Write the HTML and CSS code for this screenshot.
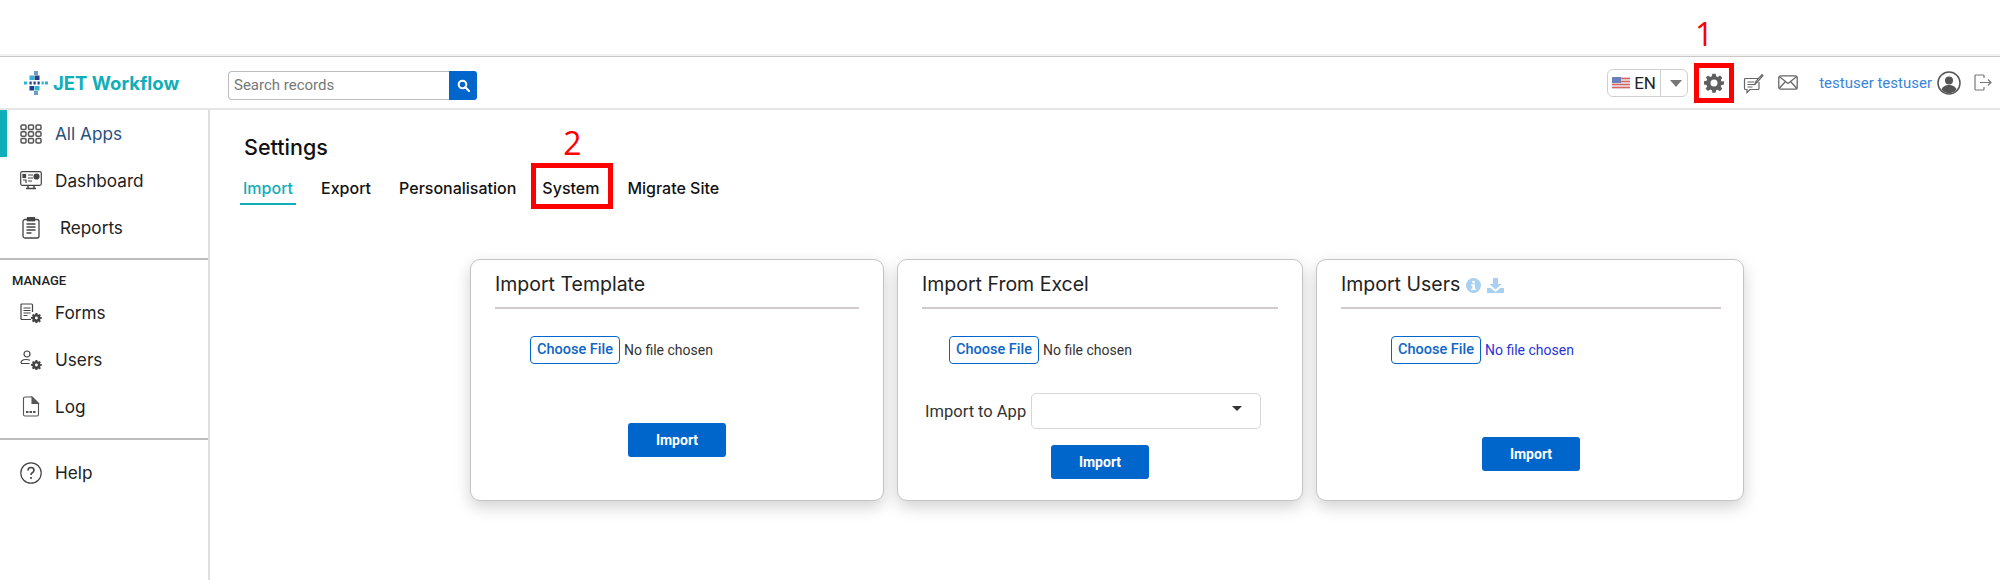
FILE: index.html
```html
<!DOCTYPE html>
<html lang="en">
<head>
<meta charset="utf-8">
<title>JET Workflow Settings</title>
<link rel="stylesheet" href="styles.css">
</head>
<body>
<div class="topgap"></div>
<header class="header">
  <div class="logo">
    <svg class="logo-mark" width="24" height="24" viewBox="0 0 24 24">
      <rect x="10" y="0" width="4" height="4" fill="#6f9cc4"/>
      <rect x="5.500" y="4.500" width="4.500" height="4.500" fill="#2bb5cf"/><rect x="10.500" y="4.500" width="5" height="4.500" fill="#1e3f8f"/>
      <rect x="0" y="10.500" width="3" height="3" fill="#2bb5cf"/><rect x="5.500" y="10.500" width="2.200" height="3" fill="#1e3f8f"/><rect x="9.500" y="10.500" width="2.200" height="3" fill="#1e3f8f"/><rect x="13.500" y="10.500" width="2.200" height="3" fill="#1e3f8f"/><rect x="17.500" y="10.500" width="2.200" height="3" fill="#2bb5cf"/><rect x="21" y="10.500" width="3" height="3" fill="#2bb5cf"/>
      <rect x="5.500" y="15" width="4.500" height="4.500" fill="#1e3f8f"/><rect x="10.500" y="15" width="5" height="4.500" fill="#2bb5cf"/>
      <rect x="10" y="20" width="4" height="4" fill="#6f9cc4"/>
    </svg>
    <span class="logo-text">JET Workflow</span>
  </div>
  <div class="search">
    <span class="search-input">Search records</span>
    <span class="search-btn">
      <svg width="13" height="13" viewBox="0 0 13 13" fill="none" stroke="#fff" stroke-width="2"><circle cx="5.500" cy="5.500" r="3.800"/><path d="M8.300 8.300 12 12" stroke-linecap="round"/></svg>
    </span>
  </div>
  <div class="header-right">
    <div class="lang">
      <span class="lang-main">
        <svg width="18" height="12" viewBox="0 0 18 12"><rect width="18" height="12" fill="#e8e8f0"/><path d="M0 1.500h18M0 4.500h18M0 7.500h18M0 10.500h18" stroke="#d9645f" stroke-width="1.400"/><rect width="9" height="6" fill="#6d7fb8"/></svg>
        <span class="lang-code">EN</span>
      </span>
      <span class="lang-caret"></span>
    </div>
    <div class="gear-box">
      <svg width="20" height="20" viewBox="0 0 24 24"><path fill="#5f5f5f" fill-rule="evenodd" d="M10 1h4l.6 3.100 1.900.8 2.700-1.800 2.800 2.800-1.800 2.700.8 1.900L24 10v4l-3.100.6-.8 1.900 1.800 2.700-2.800 2.800-2.700-1.800-1.900.8L14 24h-4l-.6-3.100-1.900-.8-2.700 1.800L2 19.100l1.800-2.700-.8-1.900L0 14v-4l3.100-.6.8-1.900L2 5.900l2.800-2.800 2.700 1.800 1.900-.8zM12 8a4.200 4.200 0 1 0 0 8.400A4.200 4.200 0 0 0 12 8z" transform="translate(0 -.2)"/></svg>
    </div>
    <svg class="icon-chat" width="21" height="22" viewBox="0 0 21 22" fill="none" stroke="#666" stroke-width="1.200"><path d="M15.500 6.500H2.500q-1 0-1 1v9q0 1 1 1H4v3l3-3h8q1 0 1-1V10"/><path d="M4.500 10h7M4.500 12.500h8M4.500 15h5"/><path d="M12 12l1.200-3L19 2.500l1 1-5.800 6.800z" fill="#fff"/></svg>
    <svg class="icon-mail" width="20" height="15" viewBox="0 0 20 15" fill="none" stroke="#666" stroke-width="1.300"><rect x=".8" y=".8" width="18.400" height="13.400" rx="2"/><path d="M1.200 1.500 10 8.500l8.800-7M1.200 13.500 7.500 6.500M18.800 13.500 12.500 6.500"/></svg>
    <span class="username">testuser testuser</span>
    <svg class="icon-avatar" width="24" height="24" viewBox="0 0 24 24"><circle cx="12" cy="12" r="11" fill="#fff" stroke="#555" stroke-width="1.500"/><circle cx="12" cy="9.500" r="4" fill="#555"/><path d="M4.500 18.500c1.500-3.500 4.500-4.500 7.500-4.500s6 1 7.500 4.500A10.500 10.500 0 0 1 12 22.500a10.500 10.500 0 0 1-7.500-4z" fill="#555"/></svg>
    <svg class="icon-logout" width="18" height="17" viewBox="0 0 18 17" fill="none" stroke="#777" stroke-width="1.200"><path d="M10 4V2q0-1-1-1H2Q1 1 1 2v13q0 1 1 1h7q1 0 1-1v-2"/><path d="M6 8.500h11M14 5.500l3 3-3 3"/></svg>
  </div>
</header>
<div class="body-row">
  <aside class="sidebar">
    <nav class="nav-group">
      <a class="nav-item active">
        <svg class="nav-icon" width="22" height="20" viewBox="0 0 22 20" fill="none" stroke="#555" stroke-width="1.500"><rect x="1" y="1" width="5" height="4.500" rx="1.200"/><rect x="8.500" y="1" width="5" height="4.500" rx="1.200"/><rect x="16" y="1" width="5" height="4.500" rx="1.200"/><rect x="1" y="7.700" width="5" height="4.500" rx="1.200"/><rect x="8.500" y="7.700" width="5" height="4.500" rx="1.200"/><rect x="16" y="7.700" width="5" height="4.500" rx="1.200"/><rect x="1" y="14.400" width="5" height="4.500" rx="1.200"/><rect x="8.500" y="14.400" width="5" height="4.500" rx="1.200"/><rect x="16" y="14.400" width="5" height="4.500" rx="1.200"/></svg>
        <span>All Apps</span>
      </a>
      <a class="nav-item">
        <svg class="nav-icon" width="22" height="19" viewBox="0 0 22 19" fill="none" stroke="#444" stroke-width="1.200"><rect x=".7" y=".7" width="20.600" height="13.600" rx="1.500"/><path d="M8 14.500v2.500M14 14.500v2.500M6 17.500h10" stroke-width="1.500"/><path d="M3 9h3v3M8 4h5M8 7h5M8 10h4"/><circle cx="16.500" cy="5.500" r="2.500" fill="#444"/><rect x="3" y="3.500" width="2.500" height="3" fill="#444"/></svg>
        <span>Dashboard</span>
      </a>
      <a class="nav-item reports">
        <svg class="nav-icon" width="18" height="22" viewBox="0 0 18 22" fill="none" stroke="#444" stroke-width="1.300"><rect x="1" y="2.500" width="16" height="18.500" rx="2"/><rect x="5.500" y=".7" width="7" height="3" fill="#444"/><path d="M4.500 7h9M4.500 10h9M4.500 13h9M4.500 16h5"/></svg>
        <span>Reports</span>
      </a>
    </nav>
    <div class="section">
      <div class="section-title">MANAGE</div>
      <a class="nav-item">
        <svg class="nav-icon" width="22" height="20" viewBox="0 0 22 20" fill="none" stroke="#444" stroke-width="1.200"><path d="M11 16.500H2q-1 0-1-1V2q0-1 1-1h9.500q1 0 1 1v7"/><path d="M3.500 5h7M3.500 7.500h7M3.500 10h7M3.500 12.500h4"/><path transform="translate(11 9.500) scale(.45)" fill="#444" stroke="none" fill-rule="evenodd" d="M10 1h4l.6 3.100 1.900.8 2.700-1.800 2.800 2.800-1.800 2.700.8 1.900L24 10v4l-3.100.6-.8 1.900 1.800 2.700-2.800 2.800-2.700-1.800-1.900.8L14 24h-4l-.6-3.100-1.900-.8-2.700 1.800L2 19.100l1.800-2.700-.8-1.900L0 14v-4l3.100-.6.8-1.900L2 5.900l2.800-2.800 2.700 1.800 1.900-.8zM12 9a3.300 3.300 0 1 0 0 6.600A3.300 3.300 0 0 0 12 9z"/></svg>
        <span>Forms</span>
      </a>
      <a class="nav-item">
        <svg class="nav-icon" width="22" height="20" viewBox="0 0 22 20" fill="none" stroke="#444" stroke-width="1.200"><circle cx="7" cy="4" r="3"/><path d="M1 13q0-3.500 5-3.500 2.500 0 4 .8M1 13.500h8.500"/><path transform="translate(11 9.500) scale(.45)" fill="#444" stroke="none" fill-rule="evenodd" d="M10 1h4l.6 3.100 1.900.8 2.700-1.800 2.800 2.800-1.800 2.700.8 1.900L24 10v4l-3.100.6-.8 1.900 1.800 2.700-2.800 2.800-2.700-1.800-1.900.8L14 24h-4l-.6-3.100-1.900-.8-2.700 1.800L2 19.100l1.800-2.700-.8-1.900L0 14v-4l3.100-.6.8-1.900L2 5.900l2.800-2.800 2.700 1.800 1.900-.8zM12 9a3.300 3.300 0 1 0 0 6.600A3.300 3.300 0 0 0 12 9z"/></svg>
        <span>Users</span>
      </a>
      <a class="nav-item">
        <svg class="nav-icon" width="22" height="21" viewBox="0 0 22 21" fill="none" stroke="#555" stroke-width="1.100"><path d="M12 1H5Q3.500 1 3.500 2.500v16q0 1.500 1.500 1.500h12q1.500 0 1.500-1.500V7.500z"/><path d="M12 1v6.500h6.500z" fill="#555"/><path d="M6 16h10" stroke-width="2" stroke-dasharray="2.500 1"/></svg>
        <span>Log</span>
      </a>
    </div>
    <div class="help">
      <a class="nav-item">
        <svg class="nav-icon" width="22" height="22" viewBox="0 0 22 22" fill="none" stroke="#444" stroke-width="1.200"><circle cx="11" cy="11" r="10.200"/><path d="M8 8.500q0-3 3-3t3 2.800q0 1.500-1.700 2.500-1.300.8-1.300 2.200" stroke-width="1.600"/><circle cx="11" cy="16" r="1.100" fill="#444" stroke="none"/></svg>
        <span>Help</span>
      </a>
    </div>
  </aside>
  <main class="main">
    <h1 class="page-title">Settings</h1>
    <div class="tabs">
      <a class="tab current">Import</a>
      <a class="tab">Export</a>
      <a class="tab">Personalisation</a>
      <a class="tab boxed">System<span class="mark mark-two">2</span></a>
      <a class="tab">Migrate Site</a>
    </div>
    <section class="cards">
      <article class="card card-template">
        <h2 class="card-title">Import Template</h2>
        <div class="file-row">
          <span class="file-btn">Choose File</span><span class="file-name">No file chosen</span>
        </div>
        <div class="submit-row"><span class="import-btn">Import</span></div>
      </article>
      <article class="card card-excel">
        <h2 class="card-title">Import From Excel</h2>
        <div class="file-row">
          <span class="file-btn">Choose File</span><span class="file-name">No file chosen</span>
        </div>
        <div class="app-row">
          <span class="app-label">Import to App</span>
          <span class="app-select"><span class="select-caret"></span></span>
        </div>
        <div class="submit-row"><span class="import-btn">Import</span></div>
      </article>
      <article class="card card-users">
        <h2 class="card-title">Import Users
          <svg class="title-icon" width="15" height="15" viewBox="0 0 16 16"><circle cx="8" cy="8" r="8" fill="#a8d0f2"/><rect x="6.800" y="6.800" width="2.800" height="6" fill="#fff"/><rect x="5.500" y="6.800" width="2" height="1.400" fill="#fff"/><rect x="5.500" y="11.500" width="5.200" height="1.400" fill="#fff"/><circle cx="8" cy="4.300" r="1.500" fill="#fff"/></svg>
          <svg class="title-icon" width="17" height="15" viewBox="0 0 17 15"><path fill="#a8d0f2" d="M6 0h5v6h3.500L8.500 11.500 2.500 6H6zM0 10h3.500l5 4 5-4H17v5H0z"/></svg>
        </h2>
        <div class="file-row">
          <span class="file-btn">Choose File</span><span class="file-name blue">No file chosen</span>
        </div>
        <div class="submit-row"><span class="import-btn">Import</span></div>
      </article>
    </section>
  </main>
</div>
<span class="mark mark-one">1</span>
</body>
</html>
```
FILE: styles.css
```css
* { box-sizing: border-box; }
html, body { margin: 0; padding: 0; height: 100%; overflow: hidden; background: #fff; }
body { font-family: "Roboto", "Liberation Sans", sans-serif; color: #222; position: relative; }
a { color: inherit; text-decoration: none; }
.topgap { height: 57px; border-bottom: 1px solid #c9c9c9; box-shadow: 0 -2px 0 #f3f3f3 inset; }
.header { height: 53px; display: flex; align-items: center; border-bottom: 2px solid #e6e6e6; padding-left: 24px; }
.logo { display: flex; align-items: center; width: 204px; gap: 5px; }
.logo-mark { flex: none; }
.logo-text { font-family: "Inter", sans-serif; font-weight: 700; font-size: 18.500px; color: #10aeb9; white-space: nowrap; }
.search { display: flex; width: 249px; height: 29px; margin-top: 6px; }
.search-input { flex: 1; border: 1px solid #bdbdbd; border-right: 0; border-radius: 4px 0 0 4px; font-size: 15px; color: #777; padding-left: 5px; line-height: 27px; }
.search-btn { width: 28px; background: #0066cc; border-radius: 0 3px 3px 0; display: flex; align-items: center; justify-content: center; }
.header-right { margin-left: auto; display: flex; align-items: center; }
.lang { width: 81px; height: 28px; border: 1px solid #d0d0d0; border-radius: 6px; display: flex; align-items: center; margin: 1px 6px 0 0; }
.lang-main { width: 53px; height: 100%; border-right: 1px solid #d0d0d0; display: flex; align-items: center; padding-left: 4px; gap: 4px; }
.lang-code { font-size: 17px; color: #222; }
.lang-caret { width: 0; height: 0; margin-left: 9px; border-left: 6px solid transparent; border-right: 6px solid transparent; border-top: 7px solid #777; }
.gear-box { width: 40px; height: 40px; border: 5px solid #f00; display: flex; align-items: center; justify-content: center; }
.icon-chat { margin-left: 9px; }
.icon-mail { margin-left: 14px; }
.username { margin-left: 21px; font-size: 15px; color: #3a84dc; white-space: nowrap; }
.icon-avatar { margin-left: 5px; }
.icon-logout { margin-left: 13px; margin-right: 8px; }
.body-row { display: flex; height: 470px; }
.sidebar { width: 210px; flex: none; border-right: 2px solid #dedede; }
.nav-item { display: flex; align-items: center; height: 47px; padding-left: 20px; gap: 13px; font-family: "Inter", "Roboto", sans-serif; font-size: 17.200px; color: #222; }
.nav-item.active { color: #27507f; border-left: 7px solid #10aeb9; padding-left: 13px; }
.nav-item.reports { gap: 20px; padding-left: 22px; }
.nav-icon { flex: none; }
.nav-group { padding-bottom: 8px; border-bottom: 2px solid #bdbdbd; height: 150px; }
.section { height: 180px; border-bottom: 2px solid #bdbdbd; }
.section-title { font-size: 13px; font-weight: 500; color: #222; padding: 13px 0 0 12px; height: 29px; }
.help { padding-top: 9px; }
.main { flex: 1; padding: 0 0 0 30px; }
.page-title { margin: 22px 0 0 4px; font-family: "Inter", sans-serif; font-size: 21.500px; font-weight: 500; color: #111; line-height: 30px; }
.tabs { display: flex; margin-top: 13px; font-family: "Inter", sans-serif; font-size: 16px; font-weight: 500; color: #111; }
.tab { position: relative; padding: 0 3px; height: 30px; line-height: 26px; margin-right: 22px; white-space: nowrap; }
.tab.current { color: #10aeb9; border-bottom: 2px solid #10aeb9; }
.tab.boxed { margin-left: -2px; }
.tab.boxed::after { content: ""; position: absolute; left: -8px; right: -11px; top: -12px; bottom: -4px; border: 5px solid #f00; }
.mark { position: absolute; color: #f00; font-family: "Open Sans", sans-serif; font-size: 32px; font-weight: 400; line-height: 1; }
.mark-one { left: 1695px; top: 18px; }
.mark-two { left: 24px; top: -48px; }
.cards { display: flex; gap: 13px; margin: 54px 0 0 230px; align-items: flex-start; }
.card { height: 242px; border: 1px solid #c4c4c4; border-radius: 10px; box-shadow: 0 6px 16px rgba(0,0,0,.18); padding: 0 24px; background: #fff; display: flex; flex-direction: column; }
.card-template { width: 414px; }
.card-excel { width: 406px; }
.card-users { width: 428px; padding-right: 22px; }
.card-title { margin: 0; height: 49px; border-bottom: 2px solid #d0cccc; font-family: "Inter", sans-serif; font-size: 19.500px; font-weight: 400; color: #222; line-height: 48px; display: flex; align-items: center; gap: 6px; }
.title-icon { flex: none; margin-top: 3px; }
.file-row { display: flex; align-items: center; margin-top: 27px; font-size: 14px; padding-left: 35px; }
.card-excel .file-row { padding-left: 27px; }
.card-users .file-row { padding-left: 50px; }
.file-btn { width: 90px; height: 28px; border: 1px solid #0066cc; border-radius: 4px; color: #0f66c4; line-height: 26px; text-align: center; font-weight: 500; font-size: 14.500px; margin-right: 4px; }
.file-name { color: #333; }
.file-name.blue { color: #2a33d8; }
.app-row { display: flex; align-items: center; margin-top: 29px; padding-left: 3px; }
.app-label { font-size: 16.500px; color: #333; width: 106px; flex: none; white-space: nowrap; }
.app-select { width: 230px; height: 36px; border: 1px solid #d6d6d6; border-radius: 5px; display: flex; align-items: center; justify-content: flex-end; padding: 0 18px 6px 0; }
.select-caret { width: 0; height: 0; border-left: 5px solid transparent; border-right: 5px solid transparent; border-top: 5px solid #333; }
.submit-row { display: flex; justify-content: center; margin-top: 59px; }
.card-excel .submit-row { margin-top: 16px; }
.card-users .submit-row { margin-top: 73px; }
.import-btn { width: 98px; height: 34px; background: #0066cc; color: #fff; border-radius: 3px; font-size: 14px; font-weight: 700; line-height: 34px; text-align: center; }
```
